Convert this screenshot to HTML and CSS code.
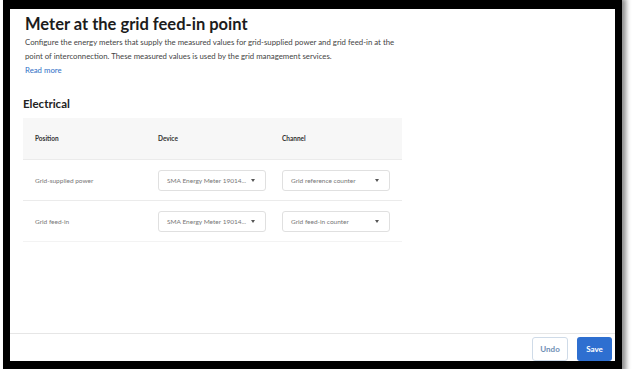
FILE: index.html
```html
<!DOCTYPE html>
<html lang="en">
<head>
    <meta charset="UTF-8">
    <meta name="viewport" content="width=device-width, initial-scale=1.0">
    <title>Meter at the grid feed-in point</title>
    <link rel="stylesheet" href="styles.css">
</head>
<body>
    <div class="frame">
        <div class="page">
            <div class="content">
                <h1>Meter at the grid feed-in point</h1>
                <p class="intro">Configure the energy meters that supply the measured values for grid-supplied power and grid feed-in at the point of interconnection. These measured values is used by the grid management services.</p>
                <a class="read-more" href="#">Read more</a>

                <h2>Electrical</h2>
                <div class="meter-table">
                    <div class="row head">
                        <div class="cell">Position</div>
                        <div class="cell">Device</div>
                        <div class="cell">Channel</div>
                    </div>
                    <div class="row">
                        <div class="cell">Grid-supplied power</div>
                        <div class="cell">
                            <div class="select"><span>SMA Energy Meter 19014...</span><i class="caret"></i></div>
                        </div>
                        <div class="cell">
                            <div class="select"><span>Grid reference counter</span><i class="caret"></i></div>
                        </div>
                    </div>
                    <div class="row last">
                        <div class="cell">Grid feed-in</div>
                        <div class="cell">
                            <div class="select"><span>SMA Energy Meter 19014...</span><i class="caret"></i></div>
                        </div>
                        <div class="cell">
                            <div class="select"><span>Grid feed-in counter</span><i class="caret"></i></div>
                        </div>
                    </div>
                </div>
            </div>
            <div class="footer">
                <button class="btn btn-undo">Undo</button>
                <button class="btn btn-save">Save</button>
            </div>
        </div>
    </div>
</body>
</html>
```

FILE: styles.css
```css
html, body {
    margin: 0;
    padding: 0;
    background: #ffffff;
    overflow: hidden;
}
body {
    font-family: Lato, "Liberation Sans", sans-serif;
    color: #333;
}
.frame {
    width: 605px;
    height: 352px;
    margin: -6px 0 0 3px;
    border: 7px solid #000;
    border-top-width: 15px;
    border-bottom-width: 8px;
    box-shadow: 4px 4px 5px rgba(0,0,0,0.45);
    background: #fff;
}
.page {
    height: 100%;
    display: flex;
    flex-direction: column;
}
.content {
    flex: 1;
    padding: 5px 0 0 13px;
}
h1 {
    margin: 0 0 0 2px;
    font-size: 16.5px;
    font-weight: 700;
    color: #1c1c1c;
    line-height: 20px;
}
.intro {
    margin: 1px 0 0 2px;
    max-width: 376px;
    font-size: 7.8px;
    line-height: 14px;
    color: #444;
}
.read-more {
    display: block;
    margin-left: 2px;
    font-size: 7.8px;
    line-height: 14px;
    color: #2f6fc6;
    text-decoration: none;
}
h2 {
    margin: 20px 0 0 0;
    font-size: 11.5px;
    font-weight: 700;
    color: #222;
    line-height: 14px;
}
.meter-table {
    width: 379px;
    margin-top: 7px;
}
.row {
    display: grid;
    grid-template-columns: 123px 124px 132px;
    align-items: center;
    height: 40px;
    border-bottom: 1px solid #ebebeb;
    font-size: 6.5px;
    color: #777;
}
.row.head {
    height: 41px;
    background: #f7f7f7;
    font-weight: 700;
    color: #333;
}
.row.last {
    border-bottom-color: #f3f3f3;
}
.cell {
    padding-left: 12px;
}
.select {
    width: 108px;
    height: 21px;
    box-sizing: border-box;
    border: 1px solid #e0e0e0;
    border-radius: 3px;
    background: #fff;
    display: flex;
    align-items: center;
    justify-content: space-between;
    padding: 0 10px 0 8px;
    color: #777;
}
.caret {
    width: 0;
    height: 0;
    border-left: 2.5px solid transparent;
    border-right: 2.5px solid transparent;
    border-top: 3px solid #555;
}
.footer {
    height: 27px;
    border-top: 1px solid #e6e6e6;
    display: flex;
    justify-content: flex-end;
    align-items: flex-end;
    gap: 9px;
    padding-right: 3px;
}
.btn {
    height: 24px;
    padding: 0;
    border-radius: 3px;
    font-family: Lato, "Liberation Sans", sans-serif;
    font-size: 8px;
    font-weight: 700;
    cursor: pointer;
}
.btn-undo {
    width: 36px;
    background: #fff;
    border: 1px solid #cfdbe8;
    color: #6f8fb5;
}
.btn-save {
    width: 35px;
    background: #2e6fd0;
    border: none;
    color: #fff;
}
```
